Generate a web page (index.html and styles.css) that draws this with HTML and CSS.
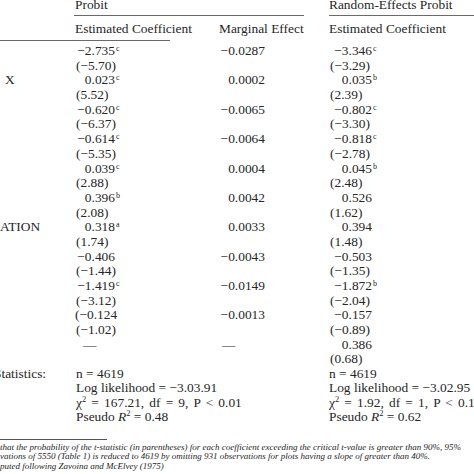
FILE: index.html
```html
<!DOCTYPE html>
<html>
<head>
<meta charset="utf-8">
<link rel="stylesheet" href="styles.css">
</head>
<body>
<div class="table">
  <div class="grp">
    <div></div>
    <div class="grp-probit">Probit</div>
    <div class="grp-re">Random-Effects Probit</div>
  </div>
  <div class="hdr">
    <div></div>
    <div class="h-coef">Estimated Coefficient</div>
    <div class="h-me">Marginal Effect</div>
    <div class="h-re">Estimated Coefficient</div>
  </div>
  <div class="rule"></div>

  <div class="body">
    <div class="row"><div class="lab"></div><div class="coef"><span class="num">−2.735</span><sup>c</sup></div><div class="me"><span class="mnum">−0.0287</span></div><div class="re"><span class="rnum">−3.346</span><sup>c</sup></div></div>
    <div class="row"><div class="lab"></div><div class="coef"><span class="par">(−5.70)</span></div><div class="me"></div><div class="re"><span class="par">(−3.29)</span></div></div>

    <div class="row"><div class="lab lab-x">X</div><div class="coef"><span class="num">0.023</span><sup>c</sup></div><div class="me"><span class="mnum">0.0002</span></div><div class="re"><span class="rnum">0.035</span><sup>b</sup></div></div>
    <div class="row"><div class="lab"></div><div class="coef"><span class="par">(5.52)</span></div><div class="me"></div><div class="re"><span class="par">(2.39)</span></div></div>

    <div class="row"><div class="lab"></div><div class="coef"><span class="num">−0.620</span><sup>c</sup></div><div class="me"><span class="mnum">−0.0065</span></div><div class="re"><span class="rnum">−0.802</span><sup>c</sup></div></div>
    <div class="row"><div class="lab"></div><div class="coef"><span class="par">(−6.37)</span></div><div class="me"></div><div class="re"><span class="par">(−3.30)</span></div></div>

    <div class="row"><div class="lab"></div><div class="coef"><span class="num">−0.614</span><sup>c</sup></div><div class="me"><span class="mnum">−0.0064</span></div><div class="re"><span class="rnum">−0.818</span><sup>c</sup></div></div>
    <div class="row"><div class="lab"></div><div class="coef"><span class="par">(−5.35)</span></div><div class="me"></div><div class="re"><span class="par">(−2.78)</span></div></div>

    <div class="row"><div class="lab"></div><div class="coef"><span class="num">0.039</span><sup>c</sup></div><div class="me"><span class="mnum">0.0004</span></div><div class="re"><span class="rnum">0.045</span><sup>b</sup></div></div>
    <div class="row"><div class="lab"></div><div class="coef"><span class="par">(2.88)</span></div><div class="me"></div><div class="re"><span class="par">(2.48)</span></div></div>

    <div class="row"><div class="lab"></div><div class="coef"><span class="num">0.396</span><sup>b</sup></div><div class="me"><span class="mnum">0.0042</span></div><div class="re"><span class="rnum">0.526</span></div></div>
    <div class="row"><div class="lab"></div><div class="coef"><span class="par">(2.08)</span></div><div class="me"></div><div class="re"><span class="par">(1.62)</span></div></div>

    <div class="row"><div class="lab lab-ation">ATION</div><div class="coef"><span class="num">0.318</span><sup>a</sup></div><div class="me"><span class="mnum">0.0033</span></div><div class="re"><span class="rnum">0.394</span></div></div>
    <div class="row"><div class="lab"></div><div class="coef"><span class="par">(1.74)</span></div><div class="me"></div><div class="re"><span class="par">(1.48)</span></div></div>

    <div class="row"><div class="lab"></div><div class="coef"><span class="num">−0.406</span></div><div class="me"><span class="mnum">−0.0043</span></div><div class="re"><span class="rnum">−0.503</span></div></div>
    <div class="row"><div class="lab"></div><div class="coef"><span class="par">(−1.44)</span></div><div class="me"></div><div class="re"><span class="par">(−1.35)</span></div></div>

    <div class="row"><div class="lab"></div><div class="coef"><span class="num">−1.419</span><sup>c</sup></div><div class="me"><span class="mnum">−0.0149</span></div><div class="re"><span class="rnum">−1.872</span><sup>b</sup></div></div>
    <div class="row"><div class="lab"></div><div class="coef"><span class="par">(−3.12)</span></div><div class="me"></div><div class="re"><span class="par">(−2.04)</span></div></div>

    <div class="row"><div class="lab"></div><div class="coef"><span class="num">(−0.124</span></div><div class="me"><span class="mnum">−0.0013</span></div><div class="re"><span class="rnum">−0.157</span></div></div>
    <div class="row"><div class="lab"></div><div class="coef"><span class="par">(−1.02)</span></div><div class="me"></div><div class="re"><span class="par">(−0.89)</span></div></div>

    <div class="row"><div class="lab"></div><div class="coef"><span class="dash">—</span></div><div class="me"><span class="mdash">—</span></div><div class="re"><span class="rnum">0.386</span></div></div>
    <div class="row"><div class="lab"></div><div class="coef"></div><div class="me"></div><div class="re"><span class="par">(0.68)</span></div></div>
  </div>

  <div class="stats">
    <div class="srow"><div class="lab lab-stat">Statistics:</div><div class="sc">n = 4619</div><div class="sr">n = 4619</div></div>
    <div class="srow"><div class="lab"></div><div class="sc">Log likelihood = −3.03.91</div><div class="sr">Log likelihood = −3.02.95</div></div>
    <div class="srow wide"><div class="lab"></div><div class="sc">χ<sup class="sq">2</sup> = 167.21, df = 9, P &lt; 0.01</div><div class="sr">χ<sup class="sq">2</sup> = 1.92, df = 1, P &lt; 0.1</div></div>
    <div class="srow"><div class="lab"></div><div class="sc">Pseudo <i>R</i><sup class="sq">2</sup> = 0.48</div><div class="sr">Pseudo <i>R</i><sup class="sq">2</sup> = 0.62</div></div>
  </div>

  <div class="foot-rule"></div>
  <div class="notes">
    <p>that the probability of the t-statistic (in parentheses) for each coefficient exceeding the critical t-value is greater than 90%, 95%</p>
    <p>vations of 5550 (Table 1) is reduced to 4619 by omitting 931 observations for plots having a slope of greater than 40%.</p>
    <p>puted following Zavoina and McElvey (1975)</p>
  </div>
</div>
</body>
</html>
```

FILE: styles.css
```css
html, body {
  margin: 0;
  padding: 0;
  background: #ffffff;
}
body {
  width: 474px;
  height: 474px;
  overflow: hidden;
  font-family: "Liberation Serif", "Times New Roman", serif;
  font-size: 13.4px;
  color: #262626;
}
.table {
  width: 474px;
  margin-top: -2px;
}
.grp {
  display: grid;
  grid-template-columns: 74px 255px 1fr;
  line-height: 14px;
}
.grp-probit {
  margin-right: 25px;
  padding-bottom: 3px;
  border-bottom: 1px solid #6a6a6a;
  padding-left: 1px;
}
.grp-re {
  padding-bottom: 3px;
  border-bottom: 1px solid #6a6a6a;
  white-space: nowrap;
}
.hdr {
  display: grid;
  grid-template-columns: 75px 142px 112px 1fr;
  line-height: 14px;
  margin-top: 6px;
  white-space: nowrap;
}
.h-me { padding-left: 2px; }
.rule {
  margin-top: 4px;
  width: 170px;
  border-top: 1px solid #6a6a6a;
}
.body {
  margin-top: 3px;
}
.row {
  display: grid;
  grid-template-columns: 75px 142px 112px 1fr;
  height: 14.7px;
  line-height: 14.7px;
  white-space: nowrap;
}
.lab-x { padding-left: 5px; }
.lab-ation { padding-left: 0; }
.num {
  display: inline-block;
  width: 40px;
  text-align: right;
}
.mnum {
  display: inline-block;
  width: 48px;
  text-align: right;
}
.rnum {
  display: inline-block;
  width: 43px;
  text-align: right;
}
.par { padding-left: 1px; }
.dash { padding-left: 8px; }
.mdash { padding-left: 5px; }
sup {
  font-size: 8px;
  line-height: 0;
  vertical-align: 4px;
  margin-left: 1px;
}
.srow {
  display: grid;
  grid-template-columns: 76px 253px 1fr;
  height: 14.2px;
  line-height: 14.2px;
  white-space: nowrap;
}
.wide { word-spacing: 1.8px; }
.lab-stat { margin-left: -6px; }
.sq {
  font-size: 8.5px;
  vertical-align: 5px;
  margin-left: 0;
}
.foot-rule {
  margin-top: 15px;
  width: 107px;
  border-top: 1px solid #555;
}
.notes {
  margin-top: 3px;
  font-style: italic;
  font-size: 9px;
  line-height: 9.4px;
  white-space: nowrap;
}
.notes p { margin: 0; }
```
